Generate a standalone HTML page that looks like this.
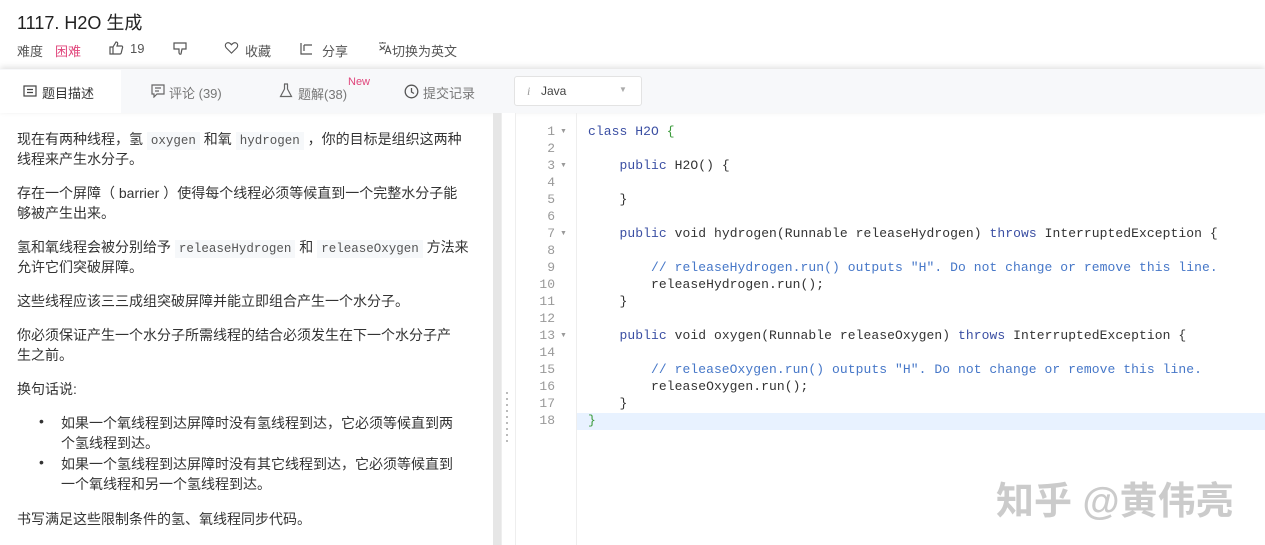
<!DOCTYPE html>
<html><head><meta charset="utf-8"><style>
*{margin:0;padding:0;box-sizing:border-box}
body{width:1265px;height:545px;overflow:hidden;background:#fff;font-family:"Liberation Sans","Noto Sans CJK SC",sans-serif;color:#333;position:relative}
.a{position:absolute;white-space:nowrap}
.t{font-size:14px;color:#333}
code{font-family:"Liberation Mono","Noto Sans CJK SC",monospace;font-size:12.5px;background:#f6f8fa;padding:2px 4px;color:#555}
.c{font-family:"Liberation Mono",monospace;font-size:13px;color:#333;letter-spacing:.07px;white-space:pre}
.ln{font-family:"Liberation Mono",monospace;font-size:13px;color:#999;text-align:right;width:40px;left:515px}
.k{color:#3b4fa3}.g{color:#3a9a3a}.cm{color:#4677c8}
.hd{font-size:13px;color:#555}
svg{position:absolute}
</style></head><body>
<div class="a" style="left:17px;top:9px;font-size:18px;color:#222">1117. H2O 生成</div>
<div class="a hd" style="left:17px;top:41px">难度</div>
<div class="a hd" style="left:55px;top:41px;color:#e0457b">困难</div>
<svg style="left:108px;top:40px" width="16" height="16" viewBox="0 0 16 16" fill="none" stroke="#555" stroke-width="1.2"><path d="M2 7h3v7H2zM5 7l3-5c1.5 0 2 1 1.5 2.5L9 6h4.5c.8 0 1.3.7 1.1 1.4l-1.4 5.5c-.2.6-.7 1.1-1.3 1.1H5"/></svg>
<div class="a hd" style="left:130px;top:41px">19</div>
<svg style="left:172px;top:41px" width="16" height="16" viewBox="0 0 16 16" fill="none" stroke="#555" stroke-width="1.2"><path d="M2 2h12v6h-4l-1 5c-1 .5-2 0-2-1.5V8H2z"/></svg>
<svg style="left:224px;top:41px" width="15" height="14" viewBox="0 0 16 15" fill="none" stroke="#555" stroke-width="1.2"><path d="M8 13L2.5 7.5C1 6 1 3.5 2.5 2.5S6 1.5 8 4c2-2.5 4-2.5 5.5-1.5S15 6 13.5 7.5z"/></svg>
<div class="a hd" style="left:245px;top:41px">收藏</div>
<svg style="left:300px;top:41px" width="14" height="14" viewBox="0 0 14 14" fill="none" stroke="#555" stroke-width="1.2"><path d="M1 2v11h11M4 4h8M4 4v6"/></svg>
<div class="a hd" style="left:322px;top:41px">分享</div>
<svg style="left:378px;top:41px" width="14" height="14" viewBox="0 0 14 14" fill="none" stroke="#555" stroke-width="1.1"><path d="M1 2h7M4.5 1v1M2 4.5c1 2 3 3.5 5 4M7 4.5C6 6.5 4 8 1.5 9M7 13l3-8 3 8M8 10.5h4"/></svg>
<div class="a hd" style="left:392px;top:41px">切换为英文</div>
<div class="a" style="left:0;top:69px;width:1265px;height:44px;background:#f7f8fa;box-shadow:0 -2px 6px rgba(0,0,0,.12)"></div>
<div class="a" style="left:0;top:70px;width:121px;height:43px;background:#fff"></div>
<svg style="left:23px;top:85px" width="14" height="12" viewBox="0 0 14 12" fill="none" stroke="#444" stroke-width="1.2"><rect x="1" y="1" width="12" height="10"/><path d="M4 4.5h6M4 7.5h6"/></svg>
<div class="a" style="left:42px;top:83px;font-size:13px;color:#333">题目描述</div>
<svg style="left:151px;top:84px" width="14" height="14" viewBox="0 0 14 14" fill="none" stroke="#666" stroke-width="1.2"><path d="M1 1h12v9H6l-3 3v-3H1z M4 4h6M4 7h4"/></svg>
<div class="a" style="left:169px;top:83px;font-size:13px;color:#777">评论 (39)</div>
<svg style="left:279px;top:83px" width="14" height="15" viewBox="0 0 14 15" fill="none" stroke="#666" stroke-width="1.2"><path d="M5 1h4M5.5 1v5L1.5 13.5h11L8.5 6V1"/></svg>
<div class="a" style="left:298px;top:84px;font-size:13px;color:#777">题解(38)</div>
<div class="a" style="left:348px;top:76px;font-size:11px;color:#e0457b">New</div>
<svg style="left:404px;top:84px" width="15" height="15" viewBox="0 0 15 15" fill="none" stroke="#555" stroke-width="1.3"><circle cx="7.5" cy="7.5" r="6.3"/><path d="M7.5 4v4l2.5 1.5"/></svg>
<div class="a" style="left:423px;top:83px;font-size:13px;color:#777">提交记录</div>
<div class="a" style="left:514px;top:76px;width:128px;height:30px;background:#fff;border:1px solid #e3e3e3;border-radius:3px"></div>
<div class="a" style="left:527px;top:84px;font-size:12px;color:#999;font-style:italic;font-family:'Liberation Serif',serif">i</div>
<div class="a" style="left:541px;top:84px;font-size:12px;color:#444">Java</div>
<div class="a" style="left:619px;top:85px;font-size:8px;color:#aaa">▼</div>
<div class="a" style="left:493px;top:113px;width:8px;height:432px;background:#e6e6e6"></div>
<div class="a" style="left:501px;top:113px;width:14px;height:432px;background:#fff;border-left:1px solid #eee"></div>
<div class="a" style="left:506px;top:392px;width:2px;height:50px;background:repeating-linear-gradient(#bbb 0 2px,transparent 2px 6px)"></div>
<div class="a" style="left:515px;top:113px;width:1px;height:432px;background:#eee"></div>
<div class="a" style="left:576px;top:113px;width:1px;height:432px;background:#eee"></div>
<div class="a" style="left:577px;top:413px;width:688px;height:17px;background:#e8f2ff"></div>

<div class="a t" style="left:17px;top:129px">现在有两种线程，氢 <code>oxygen</code> 和氧 <code>hydrogen</code> ，你的目标是组织这两种</div>
<div class="a t" style="left:17px;top:149px">线程来产生水分子。</div>
<div class="a t" style="left:17px;top:183px">存在一个屏障（ barrier ）使得每个线程必须等候直到一个完整水分子能</div>
<div class="a t" style="left:17px;top:203px">够被产生出来。</div>
<div class="a t" style="left:17px;top:237px">氢和氧线程会被分别给予 <code>releaseHydrogen</code> 和 <code>releaseOxygen</code> 方法来</div>
<div class="a t" style="left:17px;top:257px">允许它们突破屏障。</div>
<div class="a t" style="left:17px;top:291px">这些线程应该三三成组突破屏障并能立即组合产生一个水分子。</div>
<div class="a t" style="left:17px;top:325px">你必须保证产生一个水分子所需线程的结合必须发生在下一个水分子产</div>
<div class="a t" style="left:17px;top:345px">生之前。</div>
<div class="a t" style="left:17px;top:379px">换句话说:</div>
<div class="a t" style="left:39px;top:413px">•</div>
<div class="a t" style="left:61px;top:413px">如果一个氧线程到达屏障时没有氢线程到达，它必须等候直到两</div>
<div class="a t" style="left:61px;top:433px">个氢线程到达。</div>
<div class="a t" style="left:39px;top:454px">•</div>
<div class="a t" style="left:61px;top:454px">如果一个氢线程到达屏障时没有其它线程到达，它必须等候直到</div>
<div class="a t" style="left:61px;top:474px">一个氧线程和另一个氢线程到达。</div>
<div class="a t" style="left:17px;top:509px">书写满足这些限制条件的氢、氧线程同步代码。</div>

<div class="a ln" style="top:124px">1</div><div class="a ln" style="top:141px">2</div><div class="a ln" style="top:158px">3</div><div class="a ln" style="top:175px">4</div><div class="a ln" style="top:192px">5</div><div class="a ln" style="top:209px">6</div><div class="a ln" style="top:226px">7</div><div class="a ln" style="top:243px">8</div><div class="a ln" style="top:260px">9</div><div class="a ln" style="top:277px">10</div><div class="a ln" style="top:294px">11</div><div class="a ln" style="top:311px">12</div><div class="a ln" style="top:328px">13</div><div class="a ln" style="top:345px">14</div><div class="a ln" style="top:362px">15</div><div class="a ln" style="top:379px">16</div><div class="a ln" style="top:396px">17</div><div class="a ln" style="top:413px">18</div>
<div class="a" style="left:560px;top:128px;font-size:7px;color:#999">▼</div>
<div class="a" style="left:560px;top:162px;font-size:7px;color:#999">▼</div>
<div class="a" style="left:560px;top:230px;font-size:7px;color:#999">▼</div>
<div class="a" style="left:560px;top:332px;font-size:7px;color:#999">▼</div>

<div class="a c" style="left:588px;top:124px"><span class="k">class</span> <span class="k">H2O</span> <span class="g">{</span></div>
<div class="a c" style="left:588px;top:158px">    <span class="k">public</span> H2O() {</div>
<div class="a c" style="left:588px;top:192px">    }</div>
<div class="a c" style="left:588px;top:226px">    <span class="k">public</span> void hydrogen(Runnable releaseHydrogen) <span class="k">throws</span> InterruptedException {</div>
<div class="a c cm" style="left:588px;top:260px">        // releaseHydrogen.run() outputs "H". Do not change or remove this line.</div>
<div class="a c" style="left:588px;top:277px">        releaseHydrogen.run();</div>
<div class="a c" style="left:588px;top:294px">    }</div>
<div class="a c" style="left:588px;top:328px">    <span class="k">public</span> void oxygen(Runnable releaseOxygen) <span class="k">throws</span> InterruptedException {</div>
<div class="a c cm" style="left:588px;top:362px">        // releaseOxygen.run() outputs "H". Do not change or remove this line.</div>
<div class="a c" style="left:588px;top:379px">        releaseOxygen.run();</div>
<div class="a c" style="left:588px;top:396px">    }</div>
<div class="a c g" style="left:588px;top:413px">}</div>
<div class="a" style="left:996px;top:470px;font-size:38px;font-weight:bold;color:rgba(160,160,160,.55);text-shadow:1px 1px 0 rgba(255,255,255,.8)">知乎 @黄伟亮</div>
</body></html>
